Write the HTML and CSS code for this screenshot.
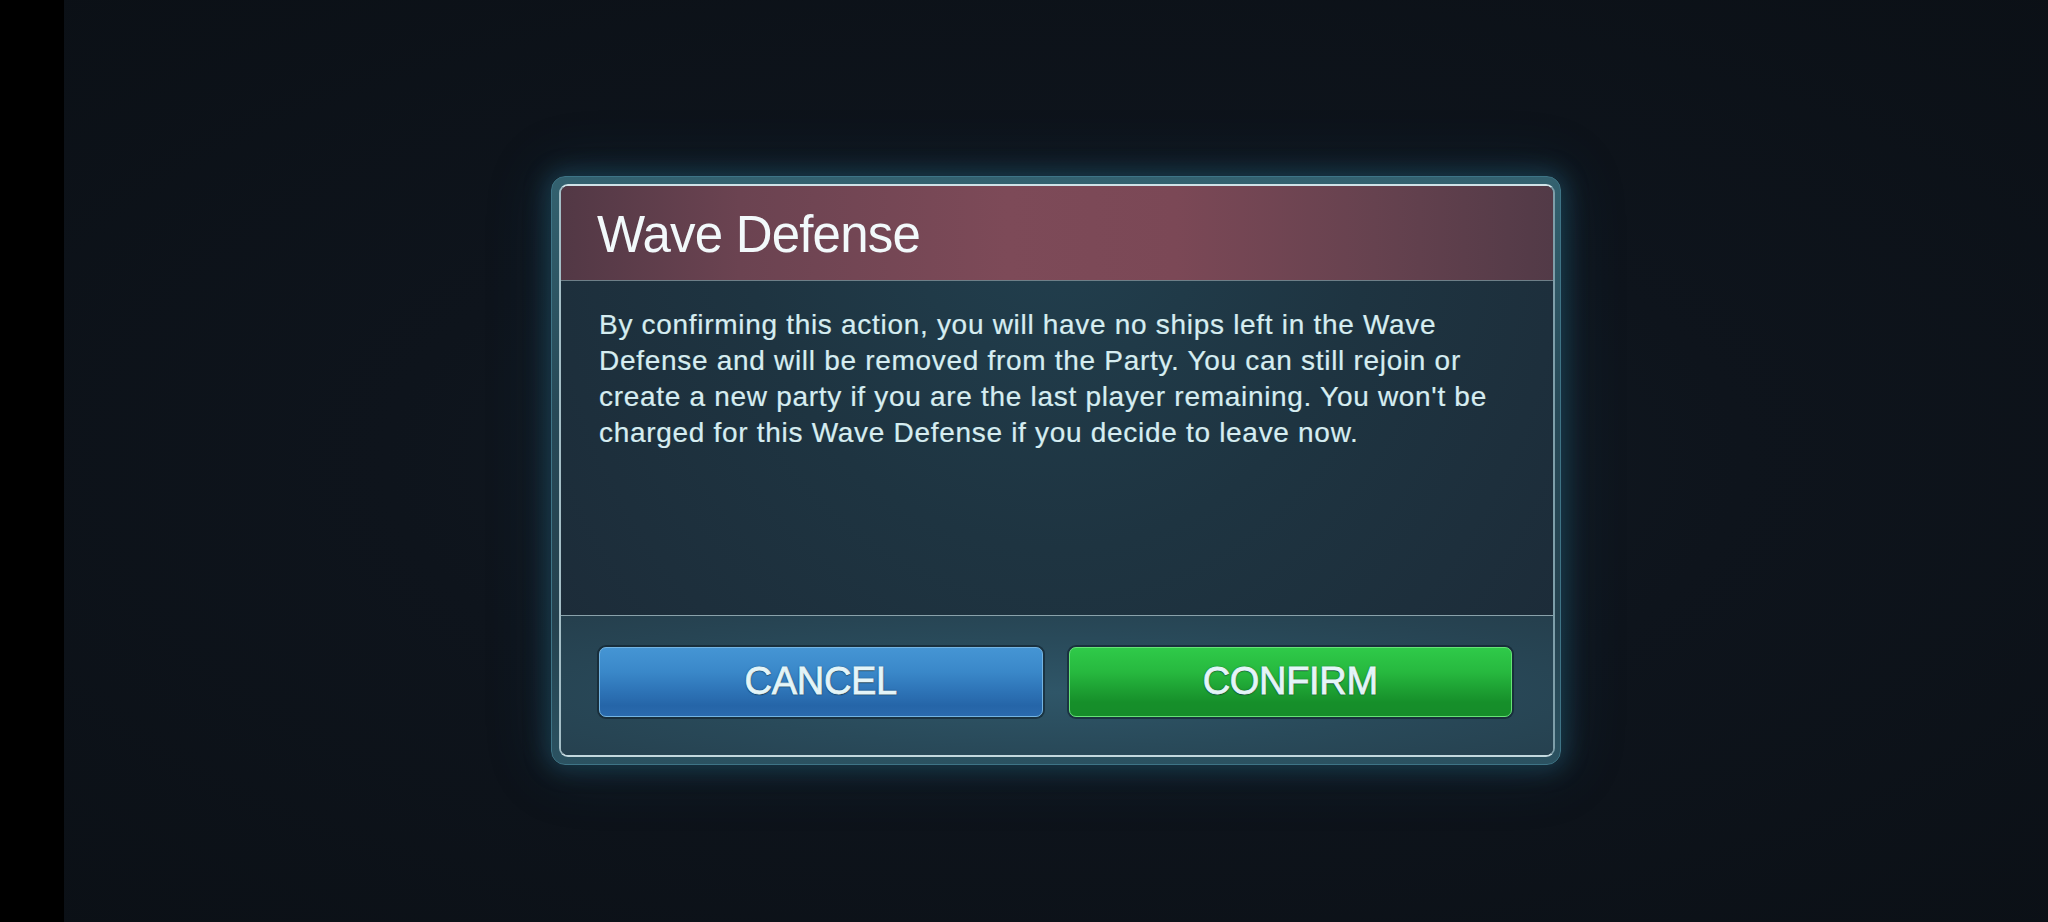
FILE: index.html
```html
<!DOCTYPE html>
<html lang="en">
<head>
    <meta charset="UTF-8">
    <meta name="viewport" content="width=device-width, initial-scale=1.0">
    <title>Wave Defense</title>
    <link rel="stylesheet" href="styles.css">
</head>
<body>
    <div class="screen-edge"></div>

    <main class="stage">
        <!-- Leave party confirmation -->
        <div class="dialog-frame">
            <div class="dialog">
                <header class="dialog-header">
                    <h1>Wave Defense</h1>
                </header>

                <div class="dialog-body">
                    <p>By confirming this action, you will have no ships left in the Wave Defense and will be removed from the Party. You can still rejoin or create a new party if you are the last player remaining. You won't be charged for this Wave Defense if you decide to leave now.</p>
                </div>

                <div class="dialog-footer">
                    <button class="btn btn-cancel" type="button">CANCEL</button>
                    <button class="btn btn-confirm" type="button">CONFIRM</button>
                </div>
            </div>
        </div>
    </main>
</body>
</html>
```

FILE: styles.css
```css
html, body {
    height: 100%;
}

body {
    margin: 0;
    display: flex;
    font-family: 'Liberation Sans', Arial, sans-serif;
    background: radial-gradient(ellipse at 52% 50%, #121b24 0%, #0e141c 45%, #0b1016 100%);
    color: #d7eef2;
    overflow: hidden;
}

.screen-edge {
    width: 64px;
    flex-shrink: 0;
    background: #000;
}

.stage {
    flex: 1;
    display: flex;
    justify-content: center;
    align-items: center;
    padding-top: 18px;
}

.dialog-frame {
    width: 1010px;
    height: 589px;
    box-sizing: border-box;
    padding: 7px 5px 7px 7px;
    border-radius: 14px;
    background: linear-gradient(180deg, #33616f 0%, #274957 40%, #25424f 75%, #2b5261 100%);
    border: 1px solid #3e7486;
    box-shadow: 0 0 22px 6px rgba(46, 128, 158, 0.3), 0 0 60px 10px rgba(30, 90, 120, 0.16);
}

.dialog {
    height: 100%;
    box-sizing: border-box;
    display: flex;
    flex-direction: column;
    border: 2px solid;
    border-color: #cfe2e7 #7e9ea9 #c3d8de #a4bec6;
    border-radius: 9px;
    overflow: hidden;
    background: radial-gradient(ellipse at 50% 0%, #22404f 0%, #1e3441 45%, #1c2a37 100%);
}

.dialog-header {
    height: 94px;
    flex-shrink: 0;
    display: flex;
    align-items: center;
    padding-left: 36px;
    background: linear-gradient(90deg, #523845 0%, #6b4351 18%, #7d4a58 45%, #7b4856 62%, #66424f 82%, #523a47 100%);
    border-bottom: 1px solid #6e7f88;
}

.dialog-header h1 {
    margin: 0 0 -4px;
    font-size: 51px;
    font-weight: normal;
    letter-spacing: -0.8px;
    color: #f2f9fb;
}

.dialog-body {
    flex: 1;
    padding: 26px 40px 0 38px;
}

.dialog-body p {
    margin: 0;
    font-size: 28px;
    line-height: 36px;
    letter-spacing: 0.7px;
    color: #d6edf1;
    -webkit-text-stroke: 0.2px #d6edf1;
}

.dialog-footer {
    height: 140px;
    flex-shrink: 0;
    box-sizing: border-box;
    display: grid;
    grid-template-columns: 1fr 1fr;
    gap: 26px;
    padding: 31px 41px 38px 38px;
    border-top: 1px solid #8aa2ab;
    background: radial-gradient(ellipse at 50% 55%, #2f5668 0%, #294a5a 50%, #253f4d 100%);
}

.btn {
    font-family: 'Liberation Sans', Arial, sans-serif;
    font-size: 38px;
    letter-spacing: -0.3px;
    color: #e4f5f8;
    -webkit-text-stroke: 0.8px #e4f5f8;
    border-radius: 7px;
    cursor: pointer;
    text-shadow: 0 0 2px rgba(8, 30, 40, 0.8), 0 1px 1px rgba(8, 30, 40, 0.7);
    box-shadow: 0 0 0 2px rgba(12, 28, 38, 0.55);
}

.btn-cancel {
    border: 1px solid #74b4e2;
    background: linear-gradient(180deg, #4595d4 0%, #3a88c9 35%, #2f76b9 60%, #2565a8 85%, #2a6aae 100%);
}

.btn-confirm {
    border: 1px solid #66e476;
    background: linear-gradient(180deg, #2fca49 0%, #27b93f 35%, #1ea334 58%, #168f2a 80%, #168c2a 100%);
}
```
